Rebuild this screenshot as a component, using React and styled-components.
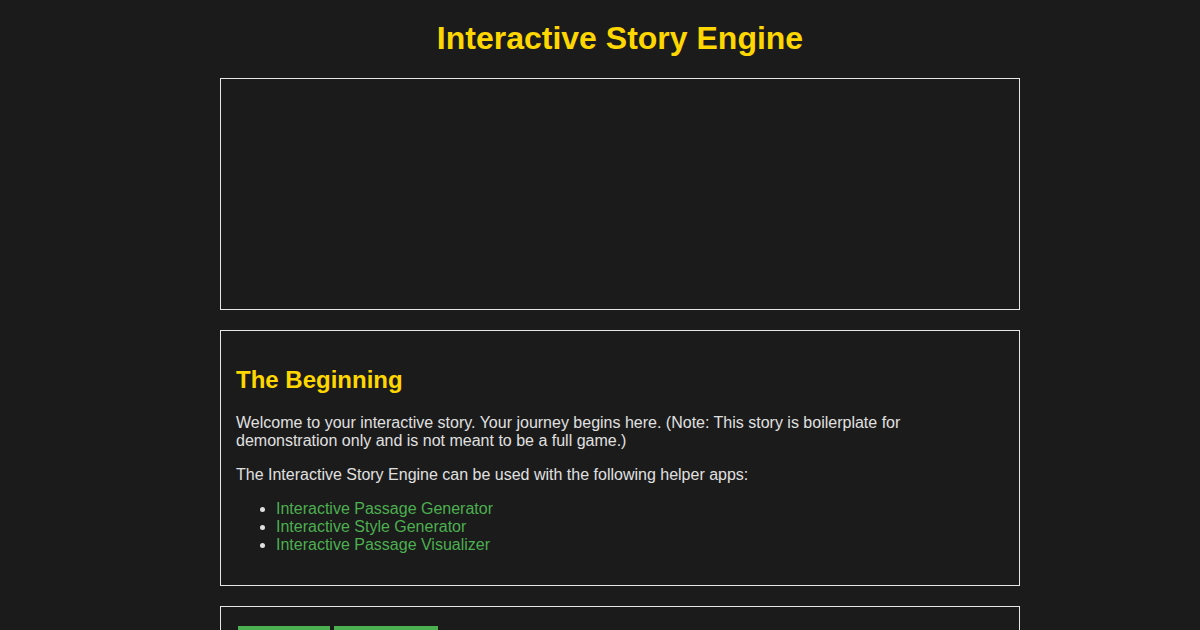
import React from 'react';
import styled, { createGlobalStyle } from 'styled-components';

const GlobalStyle = createGlobalStyle`
  body {
    width: 100%;
    margin: 0;
    padding: 20px;
    background-color: #1b1b1b;
    color: #e0e0e0;
    font-family: "Liberation Sans", Arial, sans-serif;
  }
`;

const Container = styled.div`
  width: 800px;
  margin: 0 auto;
`;

const Title = styled.h1`
  margin: 0 0 21px;
  font-size: 32px;
  line-height: 37px;
  text-align: center;
  color: #ffd700;
`;

const Panel = styled.div`
  border: 1px solid #e6e6e6;
  padding: 15px;
  margin-bottom: 20px;
  min-height: ${(p) => p.minHeight || 0}px;
`;

const PassageTitle = styled.h2`
  margin: 20px 0;
  font-size: 24px;
  color: #ffd700;
`;

const Text = styled.p`
  margin: 16px 0;
  font-size: 16px;
  line-height: 18px;
`;

const LinkList = styled.ul`
  margin: 16px 0;
  padding-left: 40px;
  font-size: 16px;
  line-height: 18px;
`;

const HelperLink = styled.a`
  color: #4caf50;
  text-decoration: none;
`;

const Controls = styled.div`
  display: flex;
  gap: 4px;
  padding: 4px 2px 0;
`;

const Button = styled.button`
  background-color: #4caf50;
  color: #fff;
  border: none;
  padding: 10px 20px;
  font-family: "Liberation Sans", Arial, sans-serif;
  font-size: 16px;
  cursor: pointer;
`;

const App = () => {
  return (
    <>
      <GlobalStyle />
      <Container>
        <Title>Interactive Story Engine</Title>
        <Panel minHeight={200} />
        <Panel>
          <PassageTitle>The Beginning</PassageTitle>
          <Text>
            Welcome to your interactive story. Your journey begins here. (Note: This story is boilerplate for
            demonstration only and is not meant to be a full game.)
          </Text>
          <Text>The Interactive Story Engine can be used with the following helper apps:</Text>
          <LinkList>
            <li><HelperLink href="#">Interactive Passage Generator</HelperLink></li>
            <li><HelperLink href="#">Interactive Style Generator</HelperLink></li>
            <li><HelperLink href="#">Interactive Passage Visualizer</HelperLink></li>
          </LinkList>
        </Panel>
        <Panel>
          <Controls>
            <Button>Restart</Button>
            <Button>Continue</Button>
          </Controls>
        </Panel>
      </Container>
    </>
  );
};

export default App;
